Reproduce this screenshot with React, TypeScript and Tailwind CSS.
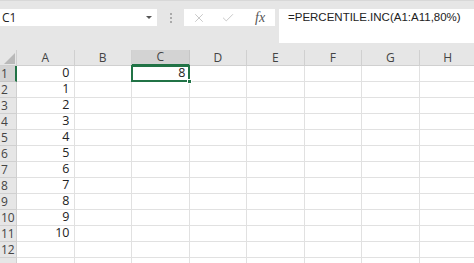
import { X, Check } from 'lucide-react';

const cols = ['A', 'B', 'C', 'D', 'E', 'F', 'G', 'H'];
const rows = Array.from({ length: 13 }, (_, i) => i + 1);
const values: Record<number, string> = {
  1: '0', 2: '1', 3: '2', 4: '3', 5: '4', 6: '5', 7: '6', 8: '7', 9: '8', 10: '9', 11: '10',
};

export default function App() {
  return (
    <div className="w-[474px] h-[263px] overflow-hidden bg-[#e6e6e6] font-['Open_Sans',sans-serif] text-[#222]">
      {/* formula bar */}
      <div className="flex items-start h-[50px] pt-[8px] border-t border-[#d8d8d8]">
        <div className="flex items-center justify-between w-[157px] h-[17px] bg-white pl-[2px] pr-[5px] text-[12px] leading-none">
          <span>C1</span>
          <span className="w-0 h-0 border-x-[3px] border-x-transparent border-t-[3px] border-t-[#555]" />
        </div>
        <div className="flex flex-col items-center justify-center gap-[2px] w-[27px] h-[17px]">
          <span className="w-[2px] h-[2px] bg-[#aaa]" />
          <span className="w-[2px] h-[2px] bg-[#aaa]" />
          <span className="w-[2px] h-[2px] bg-[#aaa]" />
        </div>
        <div className="flex items-center w-[91px] h-[17px] bg-white">
          <X className="ml-[8px] w-[14px] h-[14px] text-[#b8b8b8]" strokeWidth={1.3} />
          <Check className="ml-[15px] w-[14px] h-[14px] text-[#b8b8b8]" strokeWidth={1.3} />
          <span className="ml-[20px] text-[14px] italic text-[#555] font-['Liberation_Serif',serif] leading-none">fx</span>
        </div>
        <div className="ml-[4px] flex-1 h-[34px] bg-white pl-[9px] text-[11.5px] leading-[17px] text-[#222] font-['Liberation_Sans',sans-serif]">
          =PERCENTILE.INC(A1:A11,80%)
        </div>
      </div>

      {/* sheet grid */}
      <div className="grid grid-cols-[17px_repeat(8,57.5px)] grid-rows-[16px] auto-rows-[16px] bg-white">
        <div className="relative bg-[#e6e6e6] border-r border-b border-[#cfcfcf]">
          <span className="absolute right-[1px] bottom-[1px] w-0 h-0 border-l-[11px] border-l-transparent border-b-[11px] border-b-[#b9b9b9]" />
        </div>
        {cols.map((c) => (
          <div
            key={c}
            className={
              c === 'C'
                ? 'flex items-center justify-center bg-[#d3d3d3] border-r border-[#c6c6c6] border-b-2 border-b-[#217346] text-[12px] text-[#444]'
                : 'flex items-center justify-center bg-[#e6e6e6] border-r border-b border-[#d0d0d0] text-[12px] text-[#444]'
            }
          >
            {c}
          </div>
        ))}
        {rows.map((r) => (
          <Row key={r} r={r} />
        ))}
      </div>
    </div>
  );
}

function Row({ r }: { r: number }) {
  return (
    <>
      <div
        className={
          r === 1
            ? 'flex items-center pl-[1px] bg-[#d3d3d3] border-r-2 border-r-[#217346] border-b border-[#c6c6c6] text-[12px] text-[#444]'
            : 'flex items-center pl-[1px] bg-[#e6e6e6] border-r border-b border-[#d0d0d0] text-[12px] text-[#444]'
        }
      >
        {r < 13 ? r : ''}
      </div>
      {cols.map((c) => {
        const selected = r === 1 && c === 'C';
        const text = c === 'A' ? values[r] : selected ? '8' : '';
        return (
          <div
            key={c}
            className={
              selected
                ? 'relative flex items-center justify-end pr-[2px] border-2 border-[#217346] text-[12.5px] -ml-[1px] -mt-[1px]'
                : 'flex items-center justify-end pr-[4px] border-r border-b border-[#e1e1e1] text-[12.5px]'
            }
          >
            {text}
            {selected && (
              <span className="absolute -right-[4px] -bottom-[4px] w-[5px] h-[5px] bg-[#217346] border border-white" />
            )}
          </div>
        );
      })}
    </>
  );
}
